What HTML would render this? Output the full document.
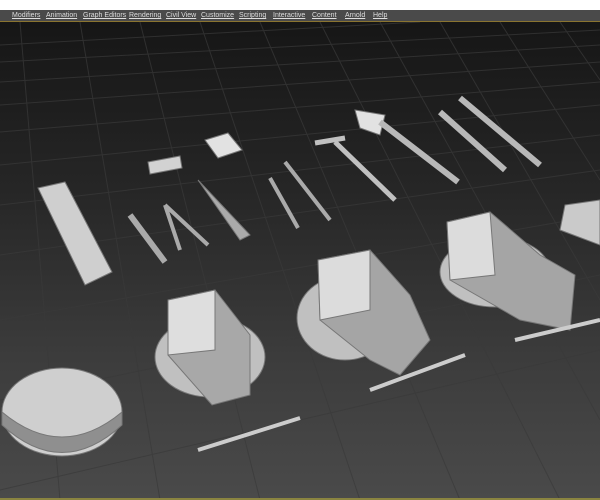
<!DOCTYPE html>
<html><head><style>
body{margin:0;width:600px;height:500px;overflow:hidden;background:#fff;font-family:"Liberation Sans",sans-serif}
#menu{position:absolute;top:10px;left:0;width:600px;height:11px;background:#4a4a4a;border-bottom:1px solid #8a7430;font-size:7px;color:#ddd;line-height:11px;white-space:nowrap}
#menu span{position:absolute;text-decoration:underline}
svg{position:absolute;top:22px;left:0}
</style></head><body>
<div id="menu">
<span style="left:12px">Modifiers</span><span style="left:46px">Animation</span><span style="left:83px">Graph Editors</span><span style="left:129px">Rendering</span><span style="left:166px">Civil View</span><span style="left:201px">Customize</span><span style="left:239px">Scripting</span><span style="left:273px">Interactive</span><span style="left:312px">Content</span><span style="left:345px">Arnold</span><span style="left:373px">Help</span>
</div>
<svg width="600" height="478" viewBox="0 22 600 478">
<defs><linearGradient id="g" x1="0" y1="0" x2="0" y2="1">
<stop offset="0" stop-color="#161616"/><stop offset="0.35" stop-color="#262626"/><stop offset="0.7" stop-color="#3c3c3c"/><stop offset="1" stop-color="#4a4a4a"/></linearGradient></defs>
<rect x="0" y="22" width="600" height="478" fill="url(#g)"/>
<g stroke="#3a3a3a" stroke-width="1" fill="none" opacity="0.7">
<path d="M0 45L420 22M0 62L600 30M0 82L600 45M0 105L600 62M0 132L600 82M0 165L600 105M0 205L600 135M0 255L600 170M0 320L600 215M0 400L600 275M0 490L600 350"/>
<path d="M20 22L60 500M80 22L160 500M140 22L260 500M200 22L360 500M260 22L460 500M320 22L560 500M380 22L600 420M440 22L600 300M500 22L600 180M560 22L600 80"/>
</g>
<rect x="0" y="498" width="600" height="2" fill="#8a8440"/>
<g fill="#c0c0c0" stroke="#777" stroke-width="1">
<ellipse cx="62" cy="412" rx="60" ry="44" fill="#cfcfcf"/>
<path d="M2 412 L2 425 Q62 480 122 425 L122 412 Q62 462 2 412Z" fill="#8f8f8f"/>
<ellipse cx="210" cy="357" rx="55" ry="40"/>
<path d="M168 300L215 290L250 335L250 395L212 405L168 355Z" fill="#a8a8a8"/>
<path d="M168 300L215 290L215 350L168 355Z" fill="#dedede"/>
<ellipse cx="345" cy="318" rx="48" ry="42"/>
<path d="M318 260L370 250L410 295L430 340L400 375L370 360L320 320Z" fill="#a5a5a5"/>
<path d="M318 260L370 250L370 310L320 320Z" fill="#dcdcdc"/>
<path d="M370 390L465 355" stroke="#ccc" stroke-width="4"/>
<ellipse cx="495" cy="272" rx="55" ry="35"/>
<path d="M447 222L490 212L540 255L575 275L570 330L520 320L450 280Z" fill="#a5a5a5"/>
<path d="M447 222L490 212L495 275L450 280Z" fill="#dcdcdc"/>
<path d="M515 340L600 320" stroke="#ccc" stroke-width="4"/>
<path d="M565 205L600 200L600 245L560 230Z" fill="#cacaca"/>
<path d="M198 450L300 418" stroke="#ccc" stroke-width="4"/>
<path d="M38 188L65 182L112 272L85 285Z" fill="#cfcfcf"/>
<path d="M130 215L165 262" stroke="#aaa" stroke-width="6"/>
<path d="M165 205L208 245M165 205L180 250" stroke="#aaa" stroke-width="4"/>
<path d="M198 180L250 235L240 240Z" fill="#aaa"/>
<path d="M148 162L180 156L182 168L150 174Z" fill="#d2d2d2"/>
<path d="M205 140L228 133L242 150L218 158Z" fill="#e2e2e2"/>
<path d="M270 178L298 228M285 162L330 220" stroke="#aaa" stroke-width="4"/>
<path d="M315 143L345 138M335 142L395 200" stroke="#c0c0c0" stroke-width="5"/>
<path d="M355 110L385 115L380 135L360 128Z" fill="#e2e2e2"/>
<path d="M380 122L458 182M440 112L505 170M460 98L540 165" stroke="#b8b8b8" stroke-width="6"/>
</g>
</svg>
</body></html>
